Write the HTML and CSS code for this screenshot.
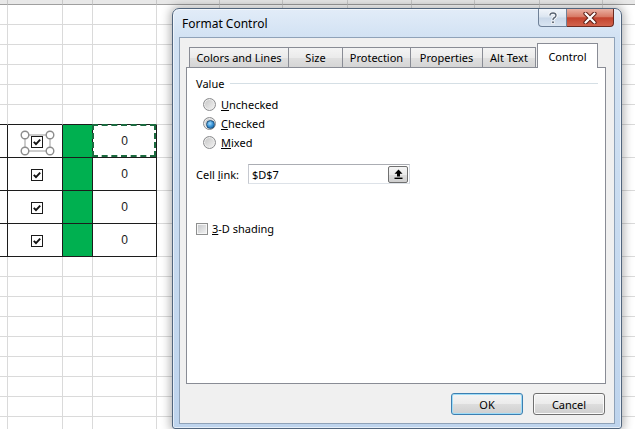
FILE: index.html
```html
<!DOCTYPE html>
<html lang="en">
<head>
    <meta charset="UTF-8">
    <title>Format Control</title>
    <link rel="stylesheet" href="styles.css">
</head>
<body>
    <div class="sheet" id="sheet"></div>

    <div class="dialog">
        <div class="titlebar">
            <span class="title">Format Control</span>
            <div class="caps">
                <div class="cap help">
                    <svg width="10" height="12" viewBox="0 0 10 12"><path d="M2 3.5 Q2 1 5 1 Q8 1 8 3.5 Q8 5 6 6 Q5 6.5 5 8" fill="none" stroke="#fff" stroke-width="3.2"/><path d="M2 3.5 Q2 1 5 1 Q8 1 8 3.5 Q8 5 6 6 Q5 6.5 5 8" fill="none" stroke="#5b6675" stroke-width="1.4"/><rect x="3.7" y="9" width="2.6" height="2.6" fill="#5b6675" stroke="#fff" stroke-width=".8"/></svg>
                </div>
                <div class="cap close">
                    <svg width="14" height="12" viewBox="0 0 14 12"><path d="M2.5 1.5 L11.5 10.5 M11.5 1.5 L2.5 10.5" stroke="#5c1f16" stroke-width="4.2" stroke-linecap="round"/><path d="M2.5 1.5 L11.5 10.5 M11.5 1.5 L2.5 10.5" stroke="#fff" stroke-width="2.2" stroke-linecap="round"/></svg>
                </div>
            </div>
        </div>

        <div class="client">
            <div class="tabs">
                <div class="tab t-colors">Colors and Lines</div>
                <div class="tab t-size">Size</div>
                <div class="tab t-protection">Protection</div>
                <div class="tab t-properties">Properties</div>
                <div class="tab t-alt">Alt Text</div>
                <div class="tab active">Control</div>
            </div>

            <div class="panel">
                <div class="group-head"><span>Value</span><span class="rule"></span></div>

                <div class="options">
                    <div class="opt"><span class="radio"></span><span><u>U</u>nchecked</span></div>
                    <div class="opt"><span class="radio on"></span><span><u>C</u>hecked</span></div>
                    <div class="opt"><span class="radio"></span><span><u>M</u>ixed</span></div>
                </div>

                <div class="link-row">
                    <span class="link-label">Cell <u>l</u>ink:</span>
                    <div class="ref-input">
                        <span class="ref-value">$D$7</span>
                        <span class="ref-btn">
                            <svg width="9" height="10" viewBox="0 0 9 10"><path d="M4.5 0.5 L8.5 4.8 H6 V7.5 H3 V4.8 H0.5 Z" fill="#000"/><rect x="0.5" y="8.6" width="8" height="1.4" fill="#000"/></svg>
                        </span>
                    </div>
                </div>

                <div class="opt shade"><span class="chk"></span><span><u>3</u>-D shading</span></div>
            </div>

            <div class="buttons">
                <button class="btn default">OK</button>
                <button class="btn">Cancel</button>
            </div>
        </div>
    </div>

    <script>
        // monta a grade da planilha
        const sheet = document.getElementById('sheet');
        const COLS = 12;
        const rows = ['hdr', 'e', 'e', 'e', 'e', 'e', 'edge', 'd', 'd', 'd', 'd',
                      'e', 'e', 'e', 'e', 'e', 'e', 'e', 'e', 'e'];

        const box = '<svg class="box" width="12" height="12" viewBox="0 0 12 12"><rect x=".5" y=".5" width="11" height="11" fill="#fff" stroke="#1b1b1b"/><path d="M2.8 5.8 L5 8.2 L9.2 3.6" fill="none" stroke="#111" stroke-width="1.9"/></svg>';
        const handles = '<svg class="handles" width="36" height="27" viewBox="0 0 36 27"><rect x="5" y="5" width="25" height="16" fill="none" stroke="#9a9a9a"/><circle cx="5" cy="5" r="3.8" fill="#fff" stroke="#8c8c8c" stroke-width="1.4"/><circle cx="30" cy="5" r="3.8" fill="#fff" stroke="#8c8c8c" stroke-width="1.4"/><circle cx="5" cy="21" r="3.8" fill="#fff" stroke="#8c8c8c" stroke-width="1.4"/><circle cx="30" cy="21" r="3.8" fill="#fff" stroke="#8c8c8c" stroke-width="1.4"/></svg>';

        let dataRow = 0;
        rows.forEach(kind => {
            for (let c = 0; c < COLS; c++) {
                const cell = document.createElement('div');
                cell.className = 'cell';
                if (kind === 'hdr') cell.classList.add('hdr');
                if (kind === 'edge' && c < 4) cell.classList.add('edge');
                if (kind === 'd' && c < 4) {
                    cell.classList.add('boxed');
                    if (c === 1) cell.innerHTML = (dataRow === 0 ? handles : '') + box;
                    if (c === 2) cell.classList.add('fill');
                    if (c === 3) {
                        cell.textContent = '0';
                        if (dataRow === 0) cell.classList.add('marquee');
                    }
                }
                sheet.appendChild(cell);
            }
            if (kind === 'd') dataRow++;
        });
    </script>
</body>
</html>
```

FILE: styles.css
```css
* {
    box-sizing: border-box;
}
body {
    margin: 0;
    width: 635px;
    height: 429px;
    overflow: hidden;
    position: relative;
    background-color: #fff;
    font-family: "Liberation Sans", Arial, sans-serif;
}

/* planilha */
.sheet {
    display: grid;
    grid-template-columns: 8px 55px 30px 64px 63px 63px 65px 64px 63px 65px 63px 63px;
    grid-template-rows: 5px repeat(6, 20px) repeat(4, 33px) repeat(9, 20px);
}
.cell {
    position: relative;
    display: flex;
    align-items: center;
    justify-content: center;
    border-right: 1px solid #dadada;
    border-bottom: 1px solid #dadada;
    font-size: 12px;
    color: #1a1a1a;
}
.hdr {
    background-color: #e8e8e8;
    border-right-color: #c8c8c8;
    border-bottom-color: #9f9f9f;
}
.edge {
    border-bottom-color: #1c1c1c;
}
.boxed {
    border-right-color: #1c1c1c;
    border-bottom-color: #1c1c1c;
}
.fill {
    background-color: #00b050;
}
.cell svg {
    display: block;
}
.cell .box {
    margin: 2px 0 0 3px;
}
.handles {
    position: absolute;
    left: 12px;
    top: 5px;
}
.cell .handles + .box {
    position: relative;
    margin-top: 1px;
}
.marquee::after {
    content: '';
    position: absolute;
    left: -1px;
    top: -1px;
    right: 0;
    bottom: 0;
    border: 2px dashed #1b6b3f;
}

/* janela */
.dialog {
    position: absolute;
    left: 172px;
    top: 8px;
    width: 450px;
    height: 421px;
    display: flex;
    flex-direction: column;
    padding: 0 6px 4px;
    border: 1px solid #51657d;
    border-radius: 7px 7px 3px 3px;
    background: linear-gradient(#e2ecf8, #d2e2f3 28px, #bed4ed);
    box-shadow: inset 0 0 0 1px rgba(255, 255, 255, 0.6), 0 0 10px 2px rgba(0, 0, 0, 0.3);
    font-family: "Noto Sans", "Open Sans", sans-serif;
    font-size: 11px;
    color: #000;
}
.titlebar {
    height: 28px;
    display: flex;
    justify-content: space-between;
    align-items: flex-start;
}
.title {
    padding: 6px 0 0 3px;
    line-height: 17px;
    font-size: 12px;
}
.caps {
    display: flex;
    margin-right: 1px;
}
.cap {
    height: 18px;
    display: flex;
    align-items: center;
    justify-content: center;
    border: 1px solid #6f8198;
    border-top: none;
}
.help {
    width: 29px;
    border-radius: 0 0 0 4px;
    background: linear-gradient(#f1f5fa, #dbe5f0 48%, #c9d7e8 52%, #d9e5f2);
}
.close {
    width: 47px;
    border-left: none;
    border-color: #6d2a20;
    border-radius: 0 0 4px 0;
    background: linear-gradient(#eab0a2, #d87a66 45%, #c3432e 52%, #d2634c);
}

.client {
    flex: 1;
    display: flex;
    flex-direction: column;
    padding: 5px 8px 0 6px;
    border: 1px solid #8fa2b8;
    background-color: #f0f0f0;
}
.tabs {
    display: flex;
    align-items: flex-end;
    height: 24px;
    padding-left: 3px;
    position: relative;
    z-index: 1;
}
.tab {
    height: 20px;
    padding-top: 1px;
    margin-right: -1px;
    line-height: 18px;
    text-align: center;
    border: 1px solid #898c95;
    border-bottom: none;
    background: linear-gradient(#f4f4f4, #ebebeb 50%, #e0e0e0 51%, #d5d5d5);
}
.t-colors { width: 100px; }
.t-size { width: 55px; }
.t-protection { width: 69px; }
.t-properties { width: 73px; }
.t-alt { width: 54px; }
.tab.active {
    width: 61px;
    height: 25px;
    margin: 0 0 -1px 2px;
    padding-top: 4px;
    background: #fff;
}

.panel {
    height: 317px;
    padding: 7px 0 0 9px;
    border: 1px solid #898c95;
    background-color: #fff;
}
.group-head {
    display: flex;
    align-items: center;
    gap: 6px;
    height: 16px;
    margin-right: 7px;
}
.rule {
    flex: 1;
    border-top: 1px solid #d5dfe5;
}
.options {
    margin: 4px 0 0 7px;
}
.opt {
    display: flex;
    align-items: center;
    gap: 5px;
    height: 19px;
}
.radio {
    position: relative;
    width: 13px;
    height: 13px;
    border-radius: 50%;
    border: 1px solid #8b8c8e;
    background: linear-gradient(135deg, #c4c4c4, #f4f4f4);
    box-shadow: inset 0 0 0 1px #ededed;
}
.radio.on::after {
    content: '';
    position: absolute;
    left: 2px;
    top: 2px;
    width: 7px;
    height: 7px;
    border-radius: 50%;
    border: 1px solid #1f4f78;
    background: radial-gradient(circle at 40% 35%, #9fdcff, #2f8ad0 55%, #1b5d93);
}

.link-row {
    display: flex;
    align-items: center;
    height: 20px;
    margin-top: 12px;
}
.link-label {
    width: 52px;
}
.ref-input {
    width: 162px;
    height: 20px;
    display: flex;
    align-items: center;
    justify-content: space-between;
    padding: 0 1px 0 3px;
    border: 1px solid #abadb3;
    border-color: #abadb3 #d5d9e0 #dde2e8 #c6c9d0;
}
.ref-btn {
    width: 20px;
    height: 17px;
    display: flex;
    align-items: center;
    justify-content: center;
    border: 1px solid #707070;
    border-radius: 2px;
    background: linear-gradient(#f4f4f4, #ebebeb 50%, #dddddd 51%, #cfcfcf);
}
.shade {
    margin-top: 35px;
    gap: 4px;
}
.chk {
    width: 12px;
    height: 12px;
    border: 1px solid #8e8f8f;
    background: linear-gradient(135deg, #c4c6c9, #f4f4f4);
    box-shadow: inset 0 0 0 1px #f6f6f6;
}

.buttons {
    display: flex;
    justify-content: flex-end;
    gap: 10px;
    margin-top: 9px;
    padding-right: 1px;
}
.btn {
    width: 72px;
    height: 22px;
    padding: 0;
    border: 1px solid #707070;
    border-radius: 3px;
    background: linear-gradient(#f4f4f4, #ebebeb 50%, #dddddd 51%, #cfcfcf);
    box-shadow: inset 0 0 0 1px #fbfbfb;
    font-family: inherit;
    font-size: 11px;
    color: #000;
}
.btn.default {
    border-color: #3c7fb1;
    box-shadow: inset 0 0 0 1px #9fdcf7;
}
```
